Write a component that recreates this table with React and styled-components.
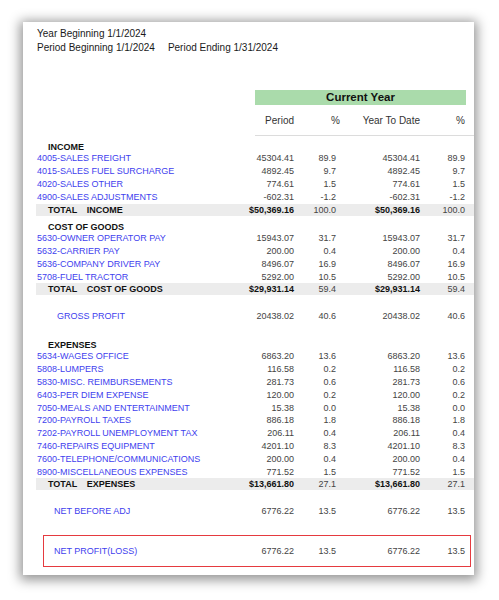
import React from 'react';
import styled, { createGlobalStyle } from 'styled-components';

const GlobalStyle = createGlobalStyle`
  html, body { margin: 0; padding: 0; background: #ffffff; }
  body { font-family: "Liberation Sans", Arial, sans-serif; }
`;

const Page = styled.div`
  padding: 22px 0 25px 23px;
`;

const Card = styled.div`
  width: 451px;
  box-sizing: border-box;
  background: #ffffff;
  box-shadow: 0 2px 11px 3px rgba(0, 0, 0, 0.42);
  padding: 5px 0 8.5px 0;
  display: flex;
  flex-direction: column;
`;

const Info = styled.div`
  padding-left: 14px;
  font-size: 10px;
  line-height: 14px;
  color: #1a1a1a;
`;

const InfoLine = styled.div`
  display: flex;
  gap: 13px;
`;

const HeaderBlock = styled.div`
  margin: 35px 0 0 232px;
`;

const GreenBar = styled.div`
  width: 211px;
  height: 15px;
  background: #aadbab;
  color: #111;
  font-weight: bold;
  font-size: 11.5px;
  line-height: 15px;
  text-align: center;
`;

const ColumnHeader = styled.div`
  display: grid;
  grid-template-columns: 39px 46px 80px 45px;
  padding-right: 9px;
  height: 30px;
  align-items: center;
  border-bottom: 1px solid #dcdcdc;
  font-size: 10px;
  color: #333;
  text-align: right;
`;

const Body = styled.div`
  margin-top: 6px;
  display: flex;
  flex-direction: column;
`;

const Section = styled.div`
  margin-bottom: 6px;
`;

const Grid = styled.div`
  display: grid;
  grid-template-columns: 1fr 57px 42px 84px 45px;
  align-items: center;
  font-size: 9px;
  white-space: nowrap;
`;

const Row = styled(Grid)`
  margin-left: 13px;
  padding: 0 9px 0 1px;
  height: ${p => (p.$kind === 'item' || p.$kind === 'summary' ? '12.9px' : p.$kind === 'total' ? '12px' : '10px')};
  line-height: ${p => (p.$kind === 'heading' ? '10px' : '12px')};
  background: ${p => (p.$kind === 'total' ? '#ececec' : 'transparent')};
  box-sizing: content-box;
  padding-top: ${p => (p.$kind === 'summary' ? '8.5px' : '0')};
  padding-bottom: ${p => (p.$kind === 'summary' ? '17px' : '0')};
`;

const Label = styled.div`
  padding-left: ${p => p.$indent || 0}px;
  color: ${p => (p.$strong ? '#111' : '#4141ee')};
  font-weight: ${p => (p.$strong ? 'bold' : 'normal')};
`;

const TotalWord = styled.span`
  margin-right: 9.5px;
`;

const Num = styled.div`
  text-align: right;
  color: ${p => (p.$strong ? '#111' : '#444')};
  font-weight: ${p => (p.$strong ? 'bold' : 'normal')};
`;

const ProfitBox = styled.div`
  margin: 0 3px 0 20px;
  border: 1px solid #e53a3f;
  padding: 9px 5px 8px 10px;
`;

const ProfitGrid = styled(Grid)`
  height: 12.9px;
  line-height: 12px;
`;

const DataCells = ({ v, strong }) => (
  <>
    <Num $strong={strong}>{v[0]}</Num>
    <Num>{v[1]}</Num>
    <Num $strong={strong}>{v[0]}</Num>
    <Num>{v[1]}</Num>
  </>
);

const sections = [
  {
    title: 'INCOME',
    items: [
      ['4005-SALES FREIGHT', '45304.41', '89.9'],
      ['4015-SALES FUEL SURCHARGE', '4892.45', '9.7'],
      ['4020-SALES OTHER', '774.61', '1.5'],
      ['4900-SALES ADJUSTMENTS', '-602.31', '-1.2'],
    ],
    total: ['$50,369.16', '100.0'],
  },
  {
    title: 'COST OF GOODS',
    items: [
      ['5630-OWNER OPERATOR PAY', '15943.07', '31.7'],
      ['5632-CARRIER PAY', '200.00', '0.4'],
      ['5636-COMPANY DRIVER PAY', '8496.07', '16.9'],
      ['5708-FUEL TRACTOR', '5292.00', '10.5'],
    ],
    total: ['$29,931.14', '59.4'],
    summary: { label: 'GROSS PROFIT', indent: 20, v: ['20438.02', '40.6'] },
  },
  {
    title: 'EXPENSES',
    items: [
      ['5634-WAGES OFFICE', '6863.20', '13.6'],
      ['5808-LUMPERS', '116.58', '0.2'],
      ['5830-MISC. REIMBURSEMENTS', '281.73', '0.6'],
      ['6403-PER DIEM EXPENSE', '120.00', '0.2'],
      ['7050-MEALS AND ENTERTAINMENT', '15.38', '0.0'],
      ['7200-PAYROLL TAXES', '886.18', '1.8'],
      ['7202-PAYROLL UNEMPLOYMENT TAX', '206.11', '0.4'],
      ['7460-REPAIRS EQUIPMENT', '4201.10', '8.3'],
      ['7600-TELEPHONE/COMMUNICATIONS', '200.00', '0.4'],
      ['8900-MISCELLANEOUS EXPENSES', '771.52', '1.5'],
    ],
    total: ['$13,661.80', '27.1'],
    summary: { label: 'NET BEFORE ADJ', indent: 17, v: ['6776.22', '13.5'] },
  },
];

export default function App() {
  return (
    <Page>
      <GlobalStyle />
      <Card>
        <Info>
          <InfoLine>Year Beginning 1/1/2024</InfoLine>
          <InfoLine>
            <span>Period Beginning 1/1/2024</span>
            <span>Period Ending 1/31/2024</span>
          </InfoLine>
        </Info>
        <HeaderBlock>
          <GreenBar>Current Year</GreenBar>
          <ColumnHeader>
            <span>Period</span>
            <span>%</span>
            <span>Year To Date</span>
            <span>%</span>
          </ColumnHeader>
        </HeaderBlock>
        <Body>
          {sections.map(s => (
            <React.Fragment key={s.title}>
              <Section>
                <Row $kind="heading">
                  <Label $strong $indent={11}>{s.title}</Label>
                </Row>
                {s.items.map(it => (
                  <Row $kind="item" key={it[0]}>
                    <Label>{it[0]}</Label>
                    <DataCells v={[it[1], it[2]]} />
                  </Row>
                ))}
                <Row $kind="total">
                  <Label $strong $indent={11}>
                    <TotalWord>TOTAL</TotalWord>
                    {s.title}
                  </Label>
                  <DataCells v={s.total} strong />
                </Row>
              </Section>
              {s.summary && (
                <Row $kind="summary">
                  <Label $indent={s.summary.indent}>{s.summary.label}</Label>
                  <DataCells v={s.summary.v} />
                </Row>
              )}
            </React.Fragment>
          ))}
          <ProfitBox>
            <ProfitGrid>
              <Label>NET PROFIT(LOSS)</Label>
              <DataCells v={['6776.22', '13.5']} />
            </ProfitGrid>
          </ProfitBox>
        </Body>
      </Card>
    </Page>
  );
}
